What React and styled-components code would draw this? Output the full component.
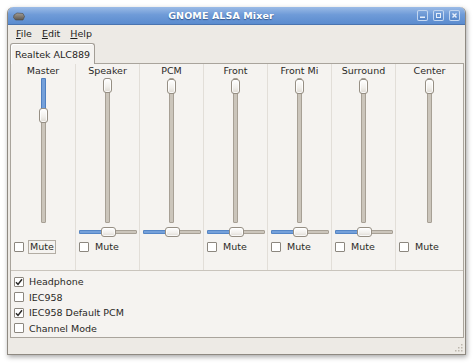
import React from 'react';
import styled, { createGlobalStyle } from 'styled-components';

const GlobalStyle = createGlobalStyle`
    html, body {
        margin: 0;
        padding: 0;
        background: #ffffff;
    }
    body {
        font-family: 'DejaVu Sans', 'Liberation Sans', sans-serif;
        font-size: 9.5px;
        color: #2c2a27;
    }
`;

const Page = styled.div`
    width: 474px;
    height: 364px;
    padding: 7px 0 0 7px;
    box-sizing: border-box;
`;

const Window = styled.div`
    width: 459px;
    height: 348px;
    display: flex;
    flex-direction: column;
    box-sizing: border-box;
    background: #edeae5;
    border: 1px solid #8e8981;
    border-top: none;
    border-radius: 6px 6px 0 0;
    overflow: hidden;
    box-shadow: 1px 2px 5px rgba(0, 0, 0, 0.35);
`;

const TitleBar = styled.div`
    height: 18px;
    flex: none;
    display: flex;
    align-items: center;
    margin: 0 -1px;
    padding: 0 6px 0 6px;
    background: linear-gradient(#9bbbe6, #6f9bd8 45%, #5b8ccf);
    border-bottom: 1px solid #4a74b0;
    border-radius: 6px 6px 0 0;
    box-sizing: border-box;
`;

const Title = styled.span`
    flex: 1;
    text-align: center;
    font-weight: bold;
    color: #ffffff;
    text-shadow: 0 1px 1px rgba(30, 60, 110, 0.7);
    letter-spacing: 0.1px;
`;

const AppIcon = styled.svg`
    flex: none;
    margin-top: 1px;
`;

const WinButtons = styled.div`
    display: flex;
    gap: 5px;
    margin-top: -1px;
`;

const WinButton = styled.div`
    width: 11px;
    height: 11px;
    box-sizing: border-box;
    border: 1px solid rgba(225, 236, 250, 0.75);
    border-radius: 2px;
    background: linear-gradient(#7da5dc, #5586c9);
    display: flex;
    align-items: center;
    justify-content: center;
`;

const MenuBar = styled.div`
    height: 17px;
    flex: none;
    display: flex;
    align-items: center;
    padding-left: 3px;
`;

const MenuItem = styled.span`
    padding: 0 5px;
    color: #1f1e1c;

    u {
        text-decoration: underline;
        text-underline-offset: 1px;
    }
`;

const TabRow = styled.div`
    height: 21px;
    flex: none;
    display: flex;
    align-items: flex-end;
    padding-left: 2px;
`;

const Tab = styled.div`
    position: relative;
    z-index: 1;
    height: 21px;
    margin-bottom: -1px;
    padding: 0 4px;
    display: flex;
    align-items: center;
    box-sizing: border-box;
    background: #f5f3f0;
    border: 1px solid #a39e96;
    border-bottom: none;
    border-radius: 3px 3px 0 0;
    box-shadow: inset 1px 1px 0 #ffffff;
    color: #1f1e1c;
`;

const Notebook = styled.div`
    height: 275px;
    flex: none;
    margin: 0 1px 0 2px;
    display: flex;
    flex-direction: column;
    box-sizing: border-box;
    background: #f5f3f0;
    border: 1px solid #a9a49c;
`;

const Mixer = styled.div`
    height: 207px;
    flex: none;
    display: flex;
    box-sizing: border-box;
    border-bottom: 1px solid #c9c4bc;
`;

const Channel = styled.div`
    width: ${({ $last }) => ($last ? 'auto' : '64px')};
    flex: ${({ $last }) => ($last ? '1' : 'none')};
    display: flex;
    flex-direction: column;
    align-items: center;
    box-sizing: border-box;
    border-left: ${({ $first }) => ($first ? 'none' : '1px solid #e2ded8')};
`;

const ChannelLabel = styled.div`
    height: 13px;
    line-height: 13px;
    white-space: nowrap;
    color: #2a2826;
`;

const VSlider = styled.div`
    position: relative;
    width: 9px;
    height: 145px;
    margin-top: 1px;
`;

const VTrack = styled.div`
    position: absolute;
    left: 2px;
    top: 0;
    bottom: 0;
    width: 5px;
    box-sizing: border-box;
    background: #cbc5bb;
    border: 1px solid #a7a095;
    border-radius: 1px;
`;

const VFill = styled.div`
    position: absolute;
    left: 2px;
    top: 0;
    width: 5px;
    height: ${({ $size }) => $size}px;
    box-sizing: border-box;
    background: #74a0da;
    border: 1px solid #4f7fc0;
    border-radius: 1px;
`;

const Thumb = styled.div`
    position: absolute;
    box-sizing: border-box;
    background: linear-gradient(#ffffff, #f1efeb 60%, #dedad3);
    border: 1px solid #968f84;
    border-radius: 3px;
    box-shadow: inset 0 0 0 1px rgba(255, 255, 255, 0.8);
`;

const VThumb = styled(Thumb)`
    left: 0;
    top: ${({ $pos }) => $pos}px;
    width: 9px;
    height: 15px;
`;

const HSlider = styled.div`
    position: relative;
    align-self: stretch;
    height: 10px;
    margin: 4px 2px 0 3px;
`;

const HTrack = styled.div`
    position: absolute;
    left: 0;
    right: 0;
    top: 3px;
    height: 4px;
    box-sizing: border-box;
    background: #cbc5bb;
    border: 1px solid #a7a095;
    border-radius: 1px;
`;

const HFill = styled.div`
    position: absolute;
    left: 0;
    top: 3px;
    width: ${({ $size }) => $size}px;
    height: 4px;
    box-sizing: border-box;
    background: #74a0da;
    border: 1px solid #5586c6;
    border-radius: 1px;
`;

const HThumb = styled(Thumb)`
    top: 0;
    left: ${({ $pos }) => $pos}px;
    width: 15px;
    height: 10px;
`;

const MuteRow = styled.label`
    align-self: flex-start;
    height: 14px;
    margin: 3px 0 0 3px;
    display: flex;
    align-items: center;
    gap: 4px;
`;

const MuteText = styled.span`
    padding: 0 1px;
    line-height: 12px;
    border: 1px solid ${({ $focus }) => ($focus ? '#b3ada4' : 'transparent')};
`;

const Box = styled.span`
    width: 10px;
    height: 10px;
    flex: none;
    box-sizing: border-box;
    background: #ffffff;
    border: 1px solid #8c877f;
    border-radius: 1px;
    display: flex;
    align-items: center;
    justify-content: center;
`;

const Switches = styled.div`
    padding: 3px 0 0 3px;
    display: flex;
    flex-direction: column;
`;

const SwitchRow = styled.label`
    height: 15.5px;
    display: flex;
    align-items: center;
    gap: 5px;
    color: #2a2826;
`;

const StatusArea = styled.div`
    flex: 1;
    display: flex;
    justify-content: flex-end;
    align-items: flex-end;
    padding: 0 2px 2px 0;
`;

const channels = [
    { name: 'Master', vpos: 30, fill: 34, balance: false, mute: true, focus: true },
    { name: 'Speaker', vpos: 0, balance: true, mute: true },
    { name: 'PCM', vpos: 1, balance: true, mute: false },
    { name: 'Front', vpos: 1, balance: true, mute: true },
    { name: 'Front Mi', vpos: 1, balance: true, mute: true },
    { name: 'Surround', vpos: 1, balance: true, mute: true },
    { name: 'Center', vpos: 1, balance: false, mute: true },
];

const switches = [
    { name: 'Headphone', checked: true },
    { name: 'IEC958', checked: false },
    { name: 'IEC958 Default PCM', checked: true },
    { name: 'Channel Mode', checked: false },
];

const Check = ({ checked }) => (
    <Box>
        {checked && (
            <svg width="8" height="8" viewBox="0 0 8 8">
                <path d="M1 4.2 L3 6.4 L7 1.2" fill="none" stroke="#2b2a28" strokeWidth="1.5" />
            </svg>
        )}
    </Box>
);

const ChannelStrip = ({ channel, first, last }) => (
    <Channel $first={first} $last={last}>
        <ChannelLabel>{channel.name}</ChannelLabel>
        <VSlider>
            <VTrack />
            {channel.fill && <VFill $size={channel.fill} />}
            <VThumb $pos={channel.vpos} />
        </VSlider>
        <HSlider>
            {channel.balance && (
                <>
                    <HTrack />
                    <HFill $size={25} />
                    <HThumb $pos={22} />
                </>
            )}
        </HSlider>
        {channel.mute && (
            <MuteRow>
                <Check checked={false} />
                <MuteText $focus={channel.focus}>Mute</MuteText>
            </MuteRow>
        )}
    </Channel>
);

const App = () => (
    <Page>
        <GlobalStyle />
        <Window>
            <TitleBar>
                <AppIcon width="12" height="9" viewBox="0 0 12 9">
                    <defs>
                        <linearGradient id="rock" x1="0" y1="0" x2="0" y2="1">
                            <stop offset="0" stopColor="#a39d95" />
                            <stop offset="1" stopColor="#5b5650" />
                        </linearGradient>
                    </defs>
                    <path d="M1 3 L4 1 L10 1.5 L11.5 4.5 L10 8 L2.5 8 L0.5 5.5 Z" fill="url(#rock)" stroke="#4e4a45" strokeWidth="0.6" />
                </AppIcon>
                <Title>GNOME ALSA Mixer</Title>
                <WinButtons>
                    <WinButton>
                        <svg width="7" height="7" viewBox="0 0 7 7">
                            <rect x="1" y="4.5" width="5" height="1.5" fill="#e6eefa" />
                        </svg>
                    </WinButton>
                    <WinButton>
                        <svg width="7" height="7" viewBox="0 0 7 7">
                            <rect x="1.5" y="1.5" width="4" height="4" fill="none" stroke="#e6eefa" strokeWidth="1" />
                        </svg>
                    </WinButton>
                    <WinButton>
                        <svg width="7" height="7" viewBox="0 0 7 7">
                            <path d="M1.5 1.5 L5.5 5.5 M5.5 1.5 L1.5 5.5" stroke="#e6eefa" strokeWidth="1.4" />
                        </svg>
                    </WinButton>
                </WinButtons>
            </TitleBar>
            <MenuBar>
                <MenuItem><u>F</u>ile</MenuItem>
                <MenuItem><u>E</u>dit</MenuItem>
                <MenuItem><u>H</u>elp</MenuItem>
            </MenuBar>
            <TabRow>
                <Tab>Realtek ALC889</Tab>
            </TabRow>
            <Notebook>
                <Mixer>
                    {channels.map((channel, i) => (
                        <ChannelStrip
                            key={channel.name}
                            channel={channel}
                            first={i === 0}
                            last={i === channels.length - 1}
                        />
                    ))}
                </Mixer>
                <Switches>
                    {switches.map((item) => (
                        <SwitchRow key={item.name}>
                            <Check checked={item.checked} />
                            {item.name}
                        </SwitchRow>
                    ))}
                </Switches>
            </Notebook>
            <StatusArea>
                <svg width="10" height="10" viewBox="0 0 10 10">
                    {[[8, 2], [8, 5], [5, 5], [8, 8], [5, 8], [2, 8]].map(([x, y]) => (
                        <rect key={`${x}-${y}`} x={x} y={y} width="1.5" height="1.5" fill="#bdb7ae" />
                    ))}
                </svg>
            </StatusArea>
        </Window>
    </Page>
);

export default App;
